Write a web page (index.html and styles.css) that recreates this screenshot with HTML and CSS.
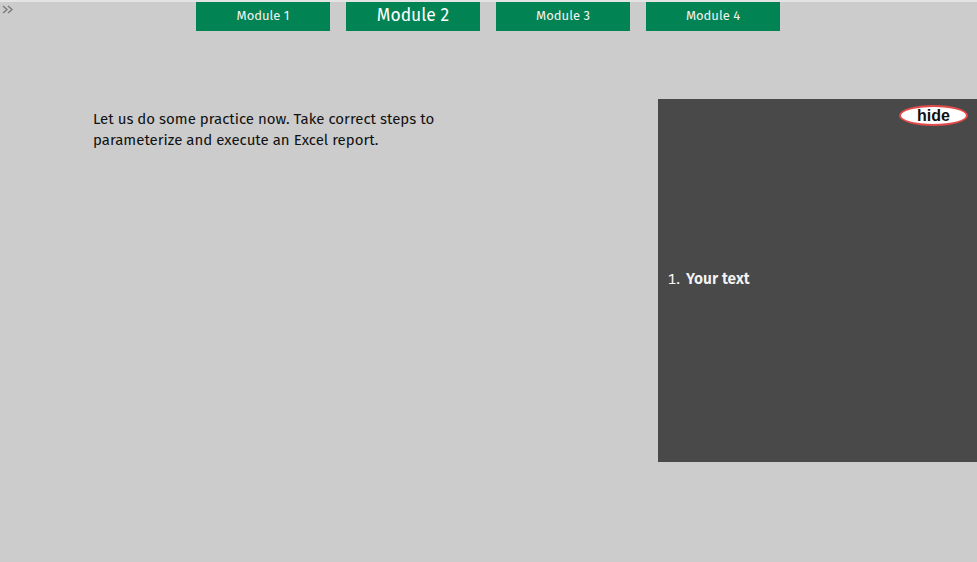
FILE: index.html
```
<!DOCTYPE html>
<html>
<head>
<meta charset="utf-8">
<link rel="stylesheet" href="styles.css">
</head>
<body>
<div class="page">
  <div class="topline"></div>
  <svg class="expand" width="12" height="12" viewBox="0 0 12 12"><path d="M1 2 L5 5.5 L1 9 M6 2 L10 5.5 L6 9" fill="none" stroke="#777" stroke-width="1.3"/></svg>
  <nav class="modules">
    <a class="mod">Module 1</a>
    <a class="mod active">Module 2</a>
    <a class="mod">Module 3</a>
    <a class="mod">Module 4</a>
  </nav>
  <div class="main">
    <p class="intro">Let us do some practice now. Take correct steps to<br>parameterize and execute an Excel report.</p>
    <aside class="panel">
      <div class="panel-head"><span class="hide">hide</span></div>
      <ol class="steps">
        <li>Your text</li>
      </ol>
    </aside>
  </div>
</div>
</body>
</html>
```
FILE: styles.css
```
html, body {
  margin: 0;
  padding: 0;
  background: #cccccc;
}
.page {
  position: relative;
  width: 977px;
  height: 562px;
  font-family: "Fira Sans", "Noto Sans", "Open Sans", sans-serif;
}
.topline {
  height: 2px;
  background: #e4e4e4;
}
.expand {
  position: absolute;
  left: 2px;
  top: 4px;
}
.modules {
  display: flex;
  gap: 16px;
  padding-left: 196px;
}
.mod {
  width: 134px;
  height: 29px;
  padding-bottom: 2px;
  box-sizing: border-box;
  background: #028353;
  color: #f2f2f2;
  font-size: 13px;
  display: flex;
  align-items: center;
  justify-content: center;
}
.mod.active {
  font-size: 17.5px;
  color: #fff;
}
.main {
  display: flex;
  justify-content: space-between;
  margin-top: 68px;
}
.intro {
  margin: 10px 0 0 93px;
  font-size: 15px;
  line-height: 21px;
  color: #111;
}
.panel {
  width: 319px;
  height: 363px;
  background: #494949;
  display: flex;
  flex-direction: column;
}
.panel-head {
  display: flex;
  justify-content: flex-end;
  padding: 6px 9px 0 0;
}
.hide {
  box-sizing: border-box;
  width: 69px;
  height: 21px;
  border: 2px solid #e44a4a;
  border-radius: 50%;
  background: #fff;
  color: #111;
  font-family: "Liberation Sans", Arial, sans-serif;
  font-size: 16px;
  font-weight: bold;
  line-height: 17px;
  text-align: center;
}
.steps {
  margin: 144px 0 0 0;
  padding-left: 26px;
  color: #f4f4f4;
  font-size: 15.5px;
}
.steps li {
  font-weight: 600;
  padding-left: 2px;
}
.steps li::marker {
  font-weight: 400;
}
```
